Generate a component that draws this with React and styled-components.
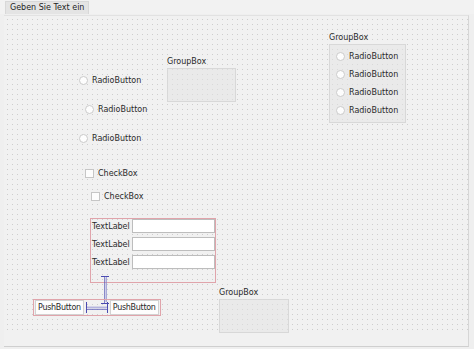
import React from 'react';
import styled, { createGlobalStyle } from 'styled-components';

const Global = createGlobalStyle`
  html, body { margin: 0; padding: 0; background: #efefef; }
  body { font-family: "DejaVu Sans", "Liberation Sans", sans-serif; font-size: 8px; color: #2a2a2a; }
`;

const Screen = styled.div`
  width: 474px;
  height: 349px;
  background: #efefef;
  position: relative;
  overflow: hidden;
`;

const MenuBar = styled.div`
  height: 14px;
  display: flex;
  align-items: flex-end;
  padding-left: 5px;
  background: #f2f2f2;
`;

const MenuEntry = styled.div`
  height: 12px;
  line-height: 12px;
  padding: 0 4px;
  background: #e4e4e4;
  border: 1px solid #d8d8d8;
  border-bottom: none;
  font-size: 8px;
  color: #1e1e1e;
`;

const Form = styled.div`
  position: relative;
  margin: 1px 0 0 4px;
  width: 464px;
  height: 330px;
  border-right: 1px solid #d6d6d6;
  border-bottom: 1px solid #cfcfcf;
  border-top: 1px solid #e2e2e2;
  background-color: #f1f1f1;
`;

const Grid = styled.div`
  height: 315px;
  background-color: #f1f1f1;
  background-image: radial-gradient(circle, #cdcdcd 0.6px, transparent 0.8px);
  background-size: 5px 5px;
  background-position: 1px 1px;
`;

const Placed = styled.div`
  position: absolute;
  left: ${p => p.$x}px;
  top: ${p => p.$y}px;
`;

const Choice = styled.label`
  display: flex;
  align-items: center;
  gap: 4px;
  height: 12px;
  white-space: nowrap;
`;

const Circle = styled.span`
  width: 9px;
  height: 9px;
  border-radius: 50%;
  background: #fdfdfd;
  border: 1px solid #cbcbcb;
  box-sizing: border-box;
`;

const Square = styled.span`
  width: 9px;
  height: 9px;
  background: #fdfdfd;
  border: 1px solid #c6c6c6;
  box-sizing: border-box;
`;

const Group = styled.div`
  display: flex;
  flex-direction: column;
  gap: 1px;
`;

const GroupTitle = styled.div`
  line-height: 10px;
`;

const GroupFrame = styled.div`
  width: ${p => p.$w}px;
  height: ${p => p.$h}px;
  border: 1px solid #d8d8d8;
  box-sizing: border-box;
  background: rgba(228, 228, 228, 0.55);
  display: flex;
  flex-direction: column;
  justify-content: space-around;
  padding: 3px 0 3px 6px;
`;

const Layout = styled.div`
  border: 1px solid #e0a4ab;
  box-sizing: border-box;
`;

const FormLayout = styled(Layout)`
  width: 126px;
  height: 65px;
  display: grid;
  grid-template-columns: auto 1fr;
  grid-auto-rows: 14px;
  row-gap: 4px;
  column-gap: 2px;
  padding: 0 0 0 1px;
  align-items: center;
`;

const Field = styled.div`
  height: 14px;
  background: #fff;
  border: 1px solid #bdbdbd;
  box-sizing: border-box;
`;

const Row = styled(Layout)`
  display: flex;
  align-items: center;
  gap: 2px;
  height: 17px;
  padding: 0 1px;
`;

const Button = styled.div`
  height: 15px;
  line-height: 14px;
  padding: 0 2px;
  letter-spacing: -0.3px;
  background: #fdfdfd;
  border: 1px solid #d2d2d2;
  box-sizing: border-box;
  white-space: nowrap;
`;

const SpacerH = () => (
  <svg width="22" height="15" viewBox="0 0 22 15">
    <line x1="0.5" y1="2" x2="0.5" y2="13" stroke="#4a4ab0" strokeWidth="1" />
    <line x1="21.5" y1="2" x2="21.5" y2="13" stroke="#4a4ab0" strokeWidth="1" />
    <line x1="1" y1="9.5" x2="21" y2="9.5" stroke="#5a5ab8" strokeWidth="0.7" />
    <path d="M1 8.5 l1 -2 l1 2 l1 -2 l1 2 l1 -2 l1 2 l1 -2 l1 2 l1 -2 l1 2 l1 -2 l1 2 l1 -2 l1 2 l1 -2 l1 2 l1 -2 l1 2 l1 -2 l1 2" fill="none" stroke="#8c8cd0" strokeWidth="0.6" />
  </svg>
);

const SpacerV = () => (
  <svg width="10" height="28" viewBox="0 0 10 28">
    <line x1="1" y1="0.5" x2="9" y2="0.5" stroke="#4a4ab0" strokeWidth="1" />
    <line x1="1" y1="27.5" x2="9" y2="27.5" stroke="#4a4ab0" strokeWidth="1" />
    <line x1="4.5" y1="1" x2="4.5" y2="27" stroke="#5a5ab8" strokeWidth="0.7" />
    <path d="M5.5 1 l1.5 1 l-1.5 1 l1.5 1 l-1.5 1 l1.5 1 l-1.5 1 l1.5 1 l-1.5 1 l1.5 1 l-1.5 1 l1.5 1 l-1.5 1 l1.5 1 l-1.5 1 l1.5 1 l-1.5 1 l1.5 1 l-1.5 1 l1.5 1 l-1.5 1 l1.5 1 l-1.5 1 l1.5 1 l-1.5 1 l1.5 1" fill="none" stroke="#8080cc" strokeWidth="0.7" />
  </svg>
);

const Radio = ({ x, y }) => (
  <Placed $x={x} $y={y}>
    <Choice><Circle />RadioButton</Choice>
  </Placed>
);

const Check = ({ x, y }) => (
  <Placed $x={x} $y={y}>
    <Choice><Square />CheckBox</Choice>
  </Placed>
);

const Box = ({ x, y, w, h, children }) => (
  <Placed $x={x} $y={y}>
    <Group>
      <GroupTitle>GroupBox</GroupTitle>
      <GroupFrame $w={w} $h={h}>{children}</GroupFrame>
    </Group>
  </Placed>
);

export default function App() {
  // positions relative to the form canvas (page x-4, y-15)
  return (
    <Screen>
      <Global />
      <MenuBar>
        <MenuEntry>Geben Sie Text ein</MenuEntry>
      </MenuBar>
      <Form>
        <Grid />
        <Radio x={75} y={58} />
        <Radio x={81} y={87} />
        <Radio x={75} y={116} />

        <Box x={163} y={41} w={69} h={34} />
        <Box x={325} y={17} w={77} h={79}>
          <Choice><Circle />RadioButton</Choice>
          <Choice><Circle />RadioButton</Choice>
          <Choice><Circle />RadioButton</Choice>
          <Choice><Circle />RadioButton</Choice>
        </Box>

        <Check x={81} y={151} />
        <Check x={87} y={174} />

        <Placed $x={86} $y={202}>
          <FormLayout>
            <span>TextLabel</span><Field />
            <span>TextLabel</span><Field />
            <span>TextLabel</span><Field />
          </FormLayout>
        </Placed>

        <Placed $x={96} $y={260}>
          <SpacerV />
        </Placed>

        <Placed $x={29} $y={283}>
          <Row>
            <Button>PushButton</Button>
            <SpacerH />
            <Button>PushButton</Button>
          </Row>
        </Placed>

        <Box x={215} y={272} w={70} h={34} />
      </Form>
    </Screen>
  );
}
